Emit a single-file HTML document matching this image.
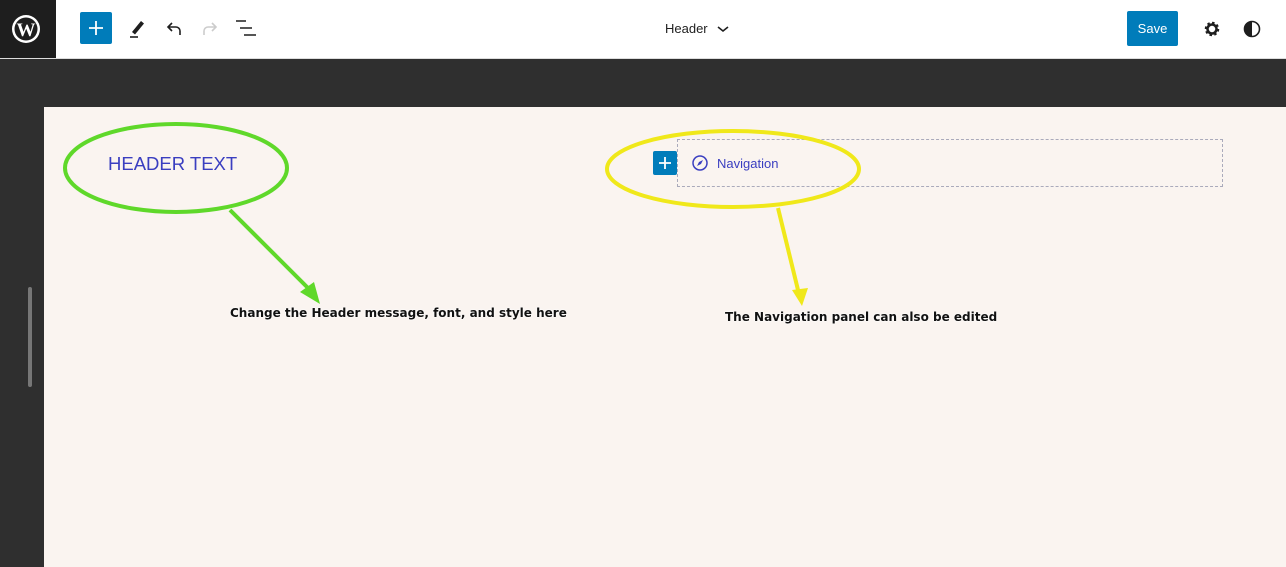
<!DOCTYPE html>
<html><head><style>
body{margin:0;width:1286px;height:567px;background:#2f2f2f;position:relative;overflow:hidden;font-family:"Liberation Sans",sans-serif}
.top{position:absolute;left:0;top:0;width:1286px;height:58px;background:#fff;border-bottom:1px solid #ddd}
.wp{position:absolute;left:0;top:0;width:56px;height:58px;background:#1e1e1e}
.canvas{position:absolute;left:44px;top:107px;width:1242px;height:460px;background:#faf4f0}
.abs{position:absolute}
.ann{font-family:"DejaVu Sans",sans-serif;font-weight:bold;font-size:12px;color:#111;text-shadow:0 0 2px #fff,0 0 2px #fff}
</style></head><body>
<div class="top">
 <div class="wp"><svg width="56" height="58"><circle cx="26" cy="29" r="14" fill="#fff"/><circle cx="26" cy="29" r="11.5" fill="#1e1e1e"/><text x="26" y="36" font-family="Liberation Serif" font-weight="bold" font-size="19" fill="#fff" text-anchor="middle">W</text></svg></div>
 <div class="abs" style="left:80px;top:12px;width:32px;height:32px;background:#007cba;border-radius:2px"><svg width="32" height="32"><path d="M16 9v14M9 16h14" stroke="#fff" stroke-width="1.8"/></svg></div>
 <svg class="abs" style="left:126px;top:16px" width="24" height="24"><path d="M6 16L15 5l3 2.5-9 11z" fill="#1e1e1e"/><path d="M4 21h8" stroke="#1e1e1e" stroke-width="1.6"/></svg>
 <svg class="abs" style="left:162px;top:16px" width="24" height="24"><path d="M18 19v-4a4 4 0 0 0-4-4H6M10 7l-4 4 4 4" fill="none" stroke="#1e1e1e" stroke-width="1.6"/></svg>
 <svg class="abs" style="left:198px;top:16px" width="24" height="24"><path d="M6 19v-4a4 4 0 0 1 4-4h8M14 7l4 4-4 4" fill="none" stroke="#ccc" stroke-width="1.6"/></svg>
 <svg class="abs" style="left:234px;top:16px" width="24" height="24"><path d="M2 5h10M6 12h12M10 19h12" stroke="#1e1e1e" stroke-width="1.6"/></svg>
 <div class="abs" style="left:665px;top:21px;font-size:13px;color:#1e1e1e">Header</div>
 <svg class="abs" style="left:716px;top:22px" width="14" height="14"><path d="M2 5l5 4 5-4" fill="none" stroke="#1e1e1e" stroke-width="1.6"/></svg>
 <div class="abs" style="left:1127px;top:11px;width:51px;height:35px;background:#007cba;border-radius:2px;color:#fff;font-size:13px;line-height:36px;text-align:center">Save</div>
 <svg class="abs" style="left:1200px;top:17px" width="24" height="24"><circle cx="12" cy="12" r="5.5" fill="none" stroke="#1e1e1e" stroke-width="3.5" stroke-dasharray="2.2 2.1"/><circle cx="12" cy="12" r="4.5" fill="none" stroke="#1e1e1e" stroke-width="2.5"/></svg>
 <svg class="abs" style="left:1240px;top:17px" width="24" height="24"><circle cx="12" cy="12" r="7.5" fill="none" stroke="#1e1e1e" stroke-width="1.6"/><path d="M12 4.5a7.5 7.5 0 0 0 0 15z" fill="#1e1e1e"/></svg>
</div>
<div class="abs" style="left:28px;top:287px;width:4px;height:100px;background:#777;border-radius:2px"></div>
<div class="canvas"></div>
<div class="abs" style="left:108px;top:153px;font-size:18.5px;color:#3a3ec0">HEADER TEXT</div>
<div class="abs" style="left:677px;top:139px;width:544px;height:46px;border:1px dashed #aab"></div>
<div class="abs" style="left:653px;top:151px;width:24px;height:24px;background:#007cba;border-radius:2px"><svg width="24" height="24"><path d="M12 6v12M6 12h12" stroke="#fff" stroke-width="1.8"/></svg></div>
<svg class="abs" style="left:691px;top:154px" width="18" height="18"><circle cx="9" cy="9" r="7" fill="none" stroke="#3a3ec0" stroke-width="1.5"/><path d="M12 6l-4 2-2 4 4-2z" fill="#3a3ec0"/></svg>
<div class="abs" style="left:717px;top:156px;font-size:13px;color:#3a3ec0">Navigation</div>
<svg class="abs" style="left:0;top:0" width="1286" height="567">
 <ellipse cx="176" cy="168" rx="111" ry="44" fill="none" stroke="#5fd82a" stroke-width="4"/>
 <path d="M230 210L312 292" stroke="#5fd82a" stroke-width="4"/>
 <path d="M300 292l20 12-6-22z" fill="#5fd82a"/>
 <ellipse cx="733" cy="169" rx="126" ry="38" fill="none" stroke="#f0e81a" stroke-width="4"/>
 <path d="M778 208L798 290" stroke="#f0e81a" stroke-width="4"/>
 <path d="M792 290l10 16 6-18z" fill="#f0e81a"/>
</svg>
<div class="abs ann" style="left:230px;top:306px">Change the Header message, font, and style here</div>
<div class="abs ann" style="left:725px;top:310px">The Navigation panel can also be edited</div>
</body></html>
